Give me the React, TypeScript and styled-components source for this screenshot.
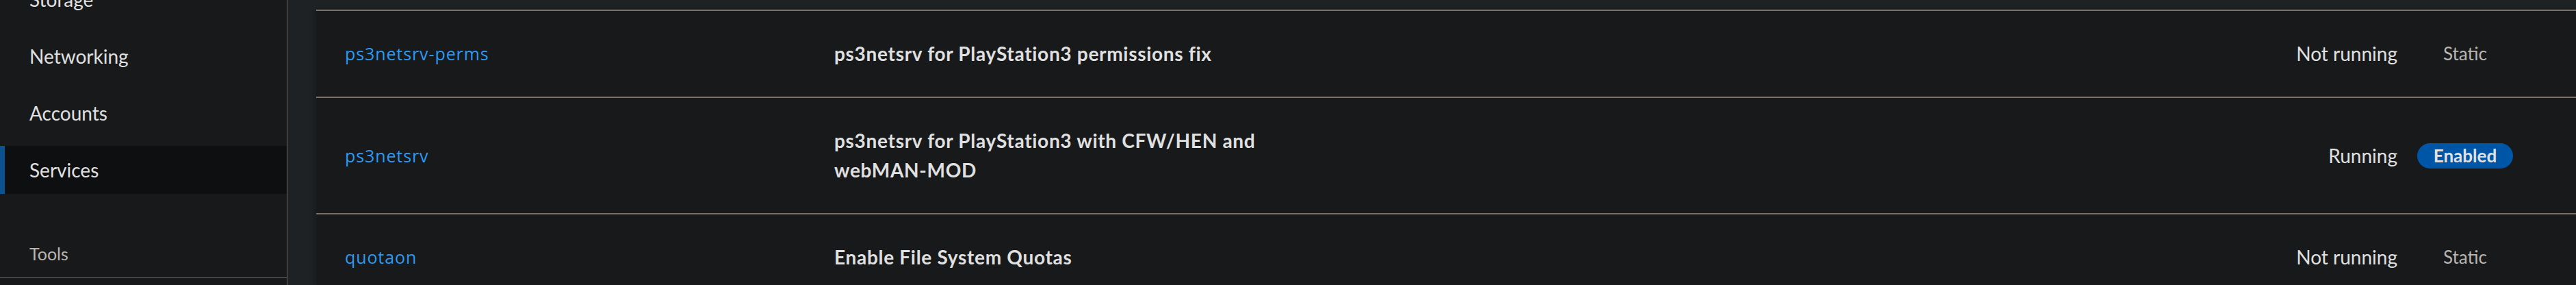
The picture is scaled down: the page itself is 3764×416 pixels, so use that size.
import styled, { createGlobalStyle } from 'styled-components';

const GlobalStyle = createGlobalStyle`
  html, body {
    margin: 0;
    padding: 0;
    background: #18191b;
    overflow: hidden;
  }
  body {
    font-family: Lato, "Open Sans", sans-serif;
    color: #e0e0e0;
  }
`;

type Service = {
  name: string;
  description: string;
  running: boolean;
  state: 'static' | 'enabled';
};

const services: Service[] = [
  {
    name: 'ps3netsrv-perms',
    description: 'ps3netsrv for PlayStation3 permissions fix',
    running: false,
    state: 'static',
  },
  {
    name: 'ps3netsrv',
    description: 'ps3netsrv for PlayStation3 with CFW/HEN and webMAN-MOD',
    running: true,
    state: 'enabled',
  },
  {
    name: 'quotaon',
    description: 'Enable File System Quotas',
    running: false,
    state: 'static',
  },
];

const navItems = ['Storage', 'Networking', 'Accounts', 'Services'];

const Page = styled.div`
  display: flex;
  width: 3764px;
  height: 416px;
  overflow: hidden;
`;

const Sidebar = styled.nav`
  flex: 0 0 419px;
  background: #18191b;
  border-right: 1px solid #6b6660;
  overflow: hidden;
`;

const NavList = styled.ul`
  list-style: none;
  margin: -36px 0 0;
  padding: 0;
  display: flex;
  flex-direction: column;
  gap: 13px;
`;

const NavItem = styled.li<{ $active?: boolean }>`
  height: 70px;
  display: flex;
  align-items: center;
  padding-left: 43px;
  font-size: 28px;
  color: #e0e0e0;
  background: ${(p) => (p.$active ? '#0e0f11' : 'transparent')};
  box-shadow: ${(p) => (p.$active ? 'inset 7px 0 0 #0b5290' : 'none')};
`;

const SectionTitle = styled.div`
  margin-top: 66px;
  padding: 0 0 13px 43px;
  line-height: 43px;
  font-size: 25px;
  color: #b8b5b0;
  border-bottom: 1px solid #6b6660;
`;

const Main = styled.main`
  flex: 1;
  display: flex;
  background: #1f2224;
  padding-left: 42px;
  padding-top: 14px;
`;

const Card = styled.div`
  flex: 1;
  background: #18191b;
  box-shadow: -4px 0 6px rgba(0, 0, 0, 0.18);
`;

const Row = styled.div`
  display: grid;
  grid-template-columns: 715px 1fr auto 198px;
  align-items: center;
  padding: 41px 63px 41px 42px;
  border-top: 2px solid #77716a;
  line-height: 43px;
`;

const Name = styled.a`
  font-family: "Open Sans", Lato, sans-serif;
  font-size: 25px;
  letter-spacing: 0.9px;
  color: #2b9af3;
  text-decoration: none;
`;

const Description = styled.div`
  max-width: 650px;
  font-size: 28px;
  font-weight: 700;
  letter-spacing: 0.7px;
  color: #e0e0e0;
`;

const Status = styled.div`
  justify-self: end;
  font-size: 28px;
  color: #e0e0e0;
`;

const State = styled.div`
  justify-self: center;
  font-size: 26px;
  color: #b8b5b0;
`;

const Badge = styled.span`
  display: inline-flex;
  align-items: center;
  height: 37px;
  padding: 0 24px;
  border-radius: 19px;
  background: #0056a6;
  color: #e0e0e0;
  font-size: 26px;
  font-weight: 700;
`;

export default function App() {
  return (
    <>
      <GlobalStyle />
      <Page>
        <Sidebar>
          <NavList>
            {navItems.map((item) => (
              <NavItem key={item} $active={item === 'Services'}>
                {item}
              </NavItem>
            ))}
          </NavList>
          <SectionTitle>Tools</SectionTitle>
        </Sidebar>
        <Main>
          <Card>
            {services.map((s) => (
              <Row key={s.name}>
                <Name href="#">{s.name}</Name>
                <Description>{s.description}</Description>
                <Status>{s.running ? 'Running' : 'Not running'}</Status>
                <State>
                  {s.state === 'enabled' ? <Badge>Enabled</Badge> : 'Static'}
                </State>
              </Row>
            ))}
          </Card>
        </Main>
      </Page>
    </>
  );
}
